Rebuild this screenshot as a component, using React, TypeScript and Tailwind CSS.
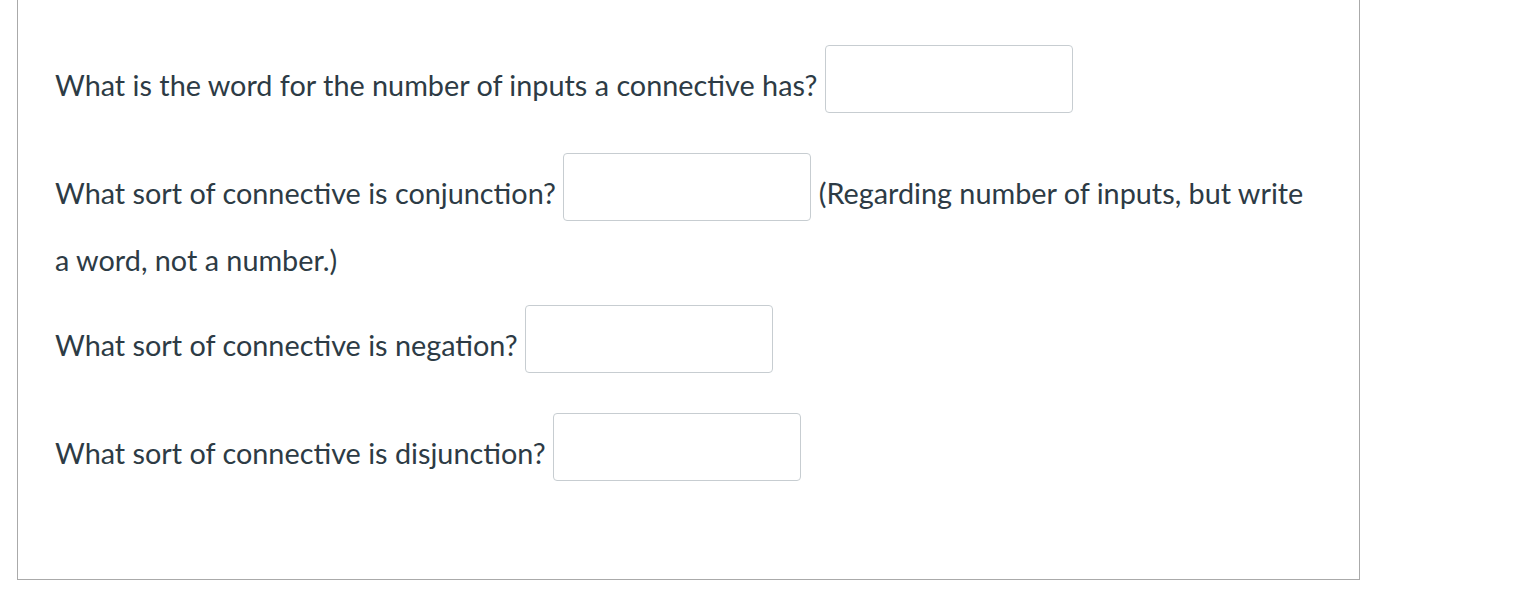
import React from 'react';

function Blank() {
  return (
    <span className="inline-block overflow-hidden align-[-34px] mb-[17px]">
      <input
        type="text"
        className="block h-[68px] w-[248px] rounded-[4px] border border-[#c7cdd1] bg-white px-3 text-[24px] text-[#2d3b45] outline-none"
      />
    </span>
  );
}

export default function App() {
  return (
    <div className="min-h-screen bg-white font-['Lato',sans-serif] text-[#2d3b45]">
      <div className="ml-[17px] w-[1343px] border border-t-0 border-[#aaaaaa] pl-[37px] pr-[37px] pt-[45px] pb-[58px] text-[28.8px] leading-[44px]">
        <p className="mb-[23px]">
          What is the word for the number of inputs a connective has? <Blank />
        </p>
        <p className="mb-[23px]">
          What sort of connective is conjunction? <Blank /> (Regarding number of inputs, but write a word, not a
          number.)
        </p>
        <p className="mb-[23px]">
          What sort of connective is negation? <Blank />
        </p>
        <p className="mb-[23px]">
          What sort of connective is disjunction? <Blank />
        </p>
      </div>
    </div>
  );
}
